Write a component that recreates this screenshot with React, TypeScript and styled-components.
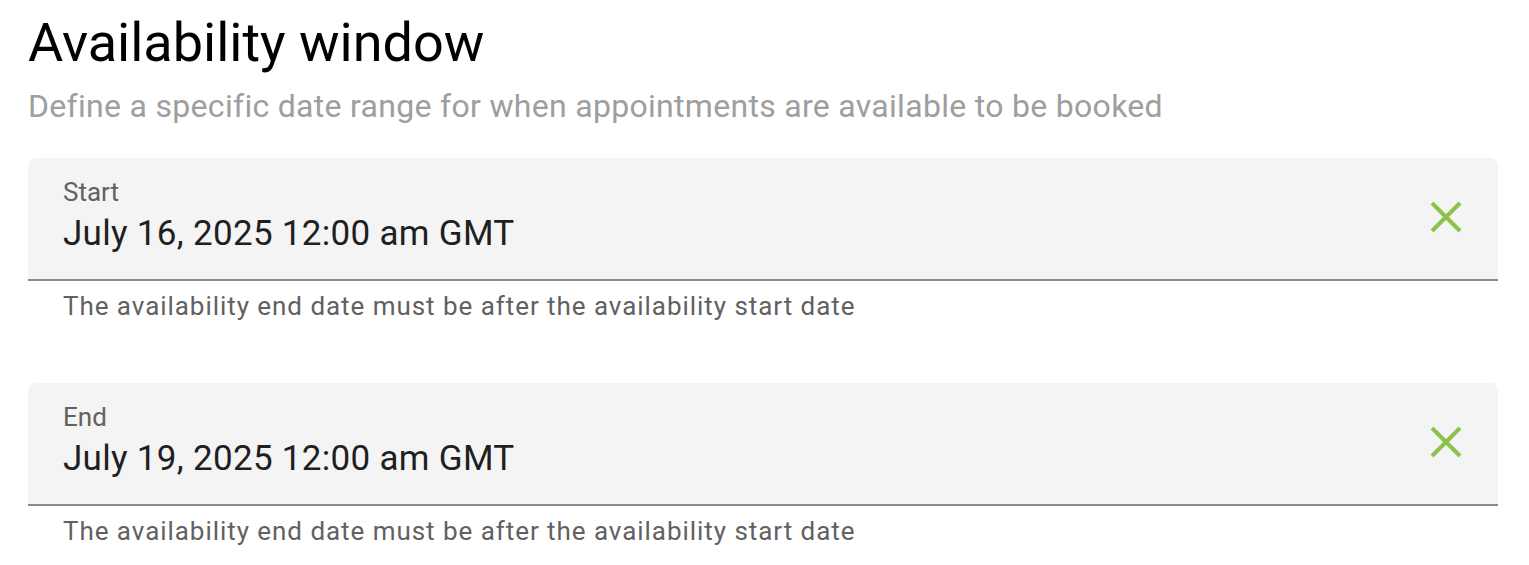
import React from 'react';
import styled, {createGlobalStyle} from 'styled-components';

const GlobalStyle = createGlobalStyle`
  html, body {
    margin: 0;
    padding: 0;
    background: #ffffff;
    font-family: Roboto, "Noto Sans", sans-serif;
  }
`;

const Page = styled.div`
  padding: 11px 31px 0 28px;
  display: flex;
  flex-direction: column;
`;

const Title = styled.h1`
  margin: 0;
  font-size: 54px;
  font-weight: 400;
  line-height: 64px;
  color: #000000;
`;

const Subtitle = styled.p`
  margin: 11px 0 0;
  font-size: 32px;
  line-height: 40px;
  letter-spacing: 0.3px;
  color: #9e9e9e;
`;

const FieldList = styled.div`
  display: flex;
  flex-direction: column;
  gap: 61px;
  margin-top: 32px;
`;

const FieldGroup = styled.div`
  display: flex;
  flex-direction: column;
`;

const FieldBox = styled.div`
  box-sizing: border-box;
  display: flex;
  align-items: center;
  height: 123px;
  padding: 0 28px 4px 35px;
  background: #f4f4f4;
  border-radius: 8px 8px 0 0;
  border-bottom: 2px solid #8a8a8a;
`;

const FieldText = styled.div`
  flex: 1;
  display: flex;
  flex-direction: column;
  gap: 5px;
`;

const Label = styled.span`
  font-size: 26px;
  line-height: 30px;
  color: #616161;
`;

const Value = styled.span`
  font-size: 35px;
  line-height: 44px;
  color: #1f1f1f;
  letter-spacing: 0.3px;
`;

const ClearButton = styled.button`
  display: flex;
  align-items: center;
  justify-content: center;
  width: 48px;
  height: 48px;
  padding: 0;
  border: none;
  background: transparent;
  cursor: pointer;
`;

const Helper = styled.div`
  padding: 9px 0 0 35px;
  font-size: 26px;
  line-height: 32px;
  letter-spacing: 0.95px;
  color: #616161;
`;

const ClearIcon = () => (
  <svg width="34" height="34" viewBox="0 0 34 34" aria-hidden>
    <path d="M3 3 L31 31 M31 3 L3 31" stroke="#8bc34a" strokeWidth="4" fill="none" />
  </svg>
);

const fields = [
  {label: 'Start', value: 'July 16, 2025 12:00 am GMT'},
  {label: 'End', value: 'July 19, 2025 12:00 am GMT'},
];

export default function App() {
  return (
    <>
      <GlobalStyle />
      <Page>
        <Title>Availability window</Title>
        <Subtitle>Define a specific date range for when appointments are available to be booked</Subtitle>
        <FieldList>
          {fields.map((f) => (
            <FieldGroup key={f.label}>
              <FieldBox>
                <FieldText>
                  <Label>{f.label}</Label>
                  <Value>{f.value}</Value>
                </FieldText>
                <ClearButton aria-label="Clear">
                  <ClearIcon />
                </ClearButton>
              </FieldBox>
              <Helper>The availability end date must be after the availability start date</Helper>
            </FieldGroup>
          ))}
        </FieldList>
      </Page>
    </>
  );
}
